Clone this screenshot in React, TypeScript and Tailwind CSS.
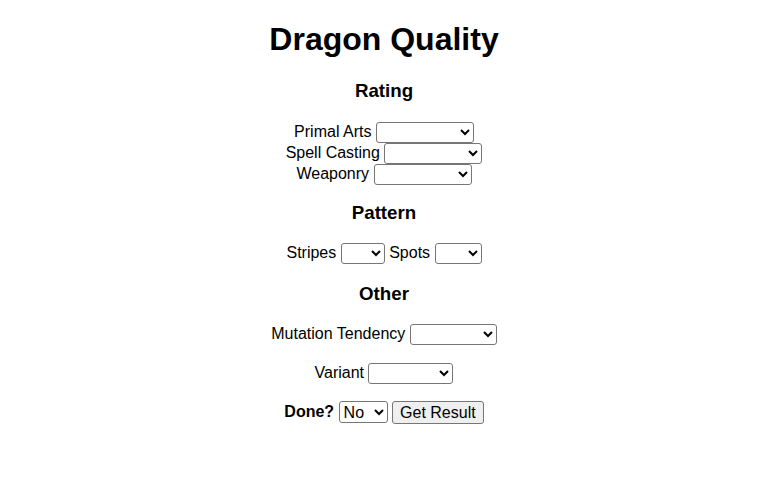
import React from 'react';

const selectCls =
    'h-[21px] border border-[#767676] rounded-[3px] bg-white text-black text-[16px] align-middle';

const Pick: React.FC<{ w: string; options?: string[] }> = ({ w, options = [''] }) => (
    <select className={`${selectCls} ${w}`} defaultValue={options[0]}>
        {options.map((o) => (
            <option key={o} value={o}>
                {o}
            </option>
        ))}
    </select>
);

const Heading: React.FC<{ children: React.ReactNode }> = ({ children }) => (
    <h3 className="text-[18.72px] font-bold leading-[21.5px]">{children}</h3>
);

const App: React.FC = () => {
    return (
        <div className="min-h-screen bg-white text-black text-[16px] text-center font-['Liberation_Sans',Arial,sans-serif]">
            <h1 className="pt-[21px] text-[32px] font-bold leading-[37px]">Dragon Quality</h1>

            <div className="mt-[22px]">
                <Heading>Rating</Heading>
                <div className="mt-[19px] leading-[21px]">
                    <div className="h-[21px]">
                        Primal Arts <Pick w="w-[98px]" />
                    </div>
                    <div className="h-[21px]">
                        Spell Casting <Pick w="w-[98px]" />
                    </div>
                    <div className="h-[21px]">
                        Weaponry <Pick w="w-[98px]" />
                    </div>
                </div>
            </div>

            <div className="mt-[18px]">
                <Heading>Pattern</Heading>
                <div className="mt-[19px] h-[21px] leading-[21px]">
                    Stripes <Pick w="w-[44px]" /> Spots <Pick w="w-[47px]" />
                </div>
            </div>

            <div className="mt-[20px]">
                <Heading>Other</Heading>
                <div className="mt-[18px] h-[21px] leading-[21px]">
                    Mutation Tendency <Pick w="w-[87px]" />
                </div>
                <div className="mt-[18px] h-[21px] leading-[21px]">
                    Variant <Pick w="w-[85px]" />
                </div>
            </div>

            <div className="mt-[17px] h-[23px] leading-[23px]">
                <b>Done?</b>{' '}
                <select className={`${selectCls} h-[22px] w-[49px]`} defaultValue="No">
                    <option value="No">No</option>
                    <option value="Yes">Yes</option>
                </select>{' '}
                <button className="h-[23px] px-[7px] border border-[#767676] rounded-[3px] bg-[#efefef] align-middle leading-[19px]">
                    Get Result
                </button>
            </div>
        </div>
    );
};

export default App;
